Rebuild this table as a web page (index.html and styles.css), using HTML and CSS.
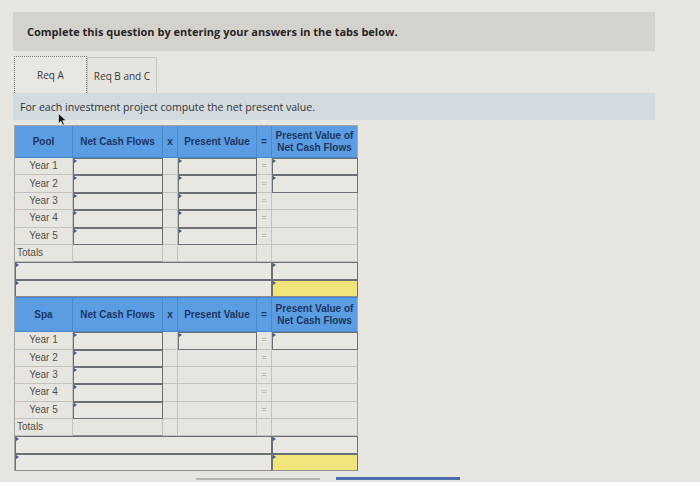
FILE: index.html
```html
<!DOCTYPE html>
<html lang="en">
<head>
<meta charset="utf-8">
<title>Net present value</title>
<link rel="stylesheet" href="styles.css">
</head>
<body>
<div class="page">
  <div class="banner">Complete this question by entering your answers in the tabs below.</div>

  <div class="tabs">
    <div class="tab active">Req A</div>
    <div class="tab">Req B and C</div>
  </div>

  <div class="instructions">For each investment project compute the net present value.</div>

  <table class="grid">
    <colgroup><col class="c-label"><col class="c-ncf"><col class="c-op"><col class="c-pv"><col class="c-op"><col class="c-res"></colgroup>
    <thead>
      <tr><th>Pool</th><th>Net Cash Flows</th><th>x</th><th>Present Value</th><th>=</th><th>Present Value of<br>Net Cash Flows</th></tr>
    </thead>
    <tbody>
      <tr><td class="lbl">Year 1</td><td class="in"><div class="inp"></div></td><td></td><td class="in"><div class="inp"></div></td><td class="eq">=</td><td class="in"><div class="inp"></div></td></tr>
      <tr><td class="lbl">Year 2</td><td class="in"><div class="inp"></div></td><td></td><td class="in"><div class="inp"></div></td><td class="eq">=</td><td class="in"><div class="inp"></div></td></tr>
      <tr><td class="lbl">Year 3</td><td class="in"><div class="inp"></div></td><td></td><td class="in"><div class="inp"></div></td><td class="eq">=</td><td></td></tr>
      <tr><td class="lbl">Year 4</td><td class="in"><div class="inp"></div></td><td></td><td class="in"><div class="inp"></div></td><td class="eq">=</td><td></td></tr>
      <tr><td class="lbl">Year 5</td><td class="in"><div class="inp"></div></td><td></td><td class="in"><div class="inp"></div></td><td class="eq">=</td><td></td></tr>
      <tr><td class="tot">Totals</td><td class="dim"></td><td></td><td></td><td></td><td></td></tr>
      <tr><td class="in" colspan="5"><div class="inp"></div></td><td class="in"><div class="inp"></div></td></tr>
      <tr><td class="in" colspan="5"><div class="inp"></div></td><td class="in"><div class="inp yellow"></div></td></tr>
    </tbody>
  </table>

  <table class="grid second">
    <colgroup><col class="c-label"><col class="c-ncf"><col class="c-op"><col class="c-pv"><col class="c-op"><col class="c-res"></colgroup>
    <thead>
      <tr><th>Spa</th><th>Net Cash Flows</th><th>x</th><th>Present Value</th><th>=</th><th>Present Value of<br>Net Cash Flows</th></tr>
    </thead>
    <tbody>
      <tr><td class="lbl">Year 1</td><td class="in"><div class="inp"></div></td><td></td><td class="in"><div class="inp"></div></td><td class="eq">=</td><td class="in"><div class="inp"></div></td></tr>
      <tr><td class="lbl">Year 2</td><td class="in"><div class="inp"></div></td><td></td><td></td><td class="eq">=</td><td></td></tr>
      <tr><td class="lbl">Year 3</td><td class="in"><div class="inp"></div></td><td></td><td></td><td class="eq">=</td><td></td></tr>
      <tr><td class="lbl">Year 4</td><td class="in"><div class="inp"></div></td><td></td><td></td><td class="eq">=</td><td></td></tr>
      <tr><td class="lbl">Year 5</td><td class="in"><div class="inp"></div></td><td></td><td></td><td class="eq">=</td><td></td></tr>
      <tr><td class="tot">Totals</td><td class="dim"></td><td></td><td></td><td></td><td></td></tr>
      <tr><td class="in" colspan="5"><div class="inp"></div></td><td class="in"><div class="inp"></div></td></tr>
      <tr><td class="in" colspan="5"><div class="inp"></div></td><td class="in"><div class="inp yellow"></div></td></tr>
    </tbody>
  </table>

  <div class="nav">
    <div class="nav-btn prev"></div>
    <div class="nav-btn next"></div>
  </div>

  <svg class="cursor" width="9" height="13" viewBox="0 0 9 13" aria-hidden="true">
    <path d="M0.5 0.5 L0.5 10.5 L3 8.2 L4.8 12.2 L6.3 11.5 L4.6 7.6 L8 7.6 Z" fill="#111" stroke="#eee" stroke-width="0.6"/>
  </svg>
</div>
</body>
</html>
```

FILE: styles.css
```css
html, body {
  margin: 0;
  padding: 0;
  overflow: hidden;
}

body {
  background: #e7e5df;
  font-family: "Open Sans", "Liberation Sans", sans-serif;
  color: #2b2b2b;
}

.page {
  position: relative;
  width: 700px;
  height: 482px;
  padding-top: 12px;
  box-sizing: border-box;
}

.banner {
  margin-left: 13px;
  width: 628px;
  height: 39px;
  padding-left: 14px;
  background: #d4d2cc;
  display: flex;
  align-items: center;
  font-weight: 700;
  font-size: 11px;
  color: #262626;
}

.tabs {
  display: flex;
  align-items: flex-end;
  margin-top: 5px;
  margin-left: 14px;
  height: 37px;
}

.tab {
  display: flex;
  align-items: center;
  justify-content: center;
  height: 36px;
  box-sizing: border-box;
  font-size: 10px;
  color: #3a3a3a;
  border: 1px solid #c9c7c1;
  border-bottom: none;
  background: #e6e4de;
}

.tab.active {
  width: 73px;
  height: 37px;
  border: 1px dotted #7a7a7a;
  border-bottom: none;
  background: #e8e6e0;
}

.tab:not(.active) {
  width: 70px;
}

.instructions {
  margin-left: 13px;
  width: 635px;
  height: 27px;
  padding-left: 7px;
  background: #d2dbe0;
  display: flex;
  align-items: center;
  font-size: 10.6px;
  color: #333;
}

.grid {
  margin-left: 14px;
  margin-top: 5px;
  width: 343px;
  table-layout: fixed;
  border-collapse: separate;
  border-spacing: 0;
  border-top: 1px solid #a9a7a2;
  border-left: 1px solid #a9a7a2;
  font-family: "Liberation Sans", Arial, sans-serif;
}

.grid.second {
  margin-top: 0;
  border-top: none;
}

.c-label { width: 58px; }
.c-ncf { width: 90px; }
.c-op { width: 15px; }
.c-pv { width: 79px; }
.c-res { width: 86px; }

.grid th {
  height: 31px;
  padding: 0;
  background: #5b9de3;
  color: #1c355e;
  font-size: 10px;
  font-weight: 700;
  line-height: 12px;
  text-align: center;
  border-right: 1px solid #4a87c9;
  border-bottom: 1px solid #4a87c9;
}

.grid.second th {
  height: 33px;
  border-top: 1px solid #4a87c9;
}

.grid td {
  height: 16.4px;
  padding: 0;
  border-right: 1px solid #c4c2bc;
  border-bottom: 1px solid #c4c2bc;
  font-size: 10px;
  color: #505050;
  line-height: 16px;
}

.grid td:last-child,
.grid th:last-child {
  border-right-color: #a9a7a2;
}

.grid tbody tr:last-child td {
  border-bottom-color: #8f8e8a;
}

.grid td.lbl {
  text-align: center;
}

.grid td.tot {
  padding-left: 2px;
}

.grid td.eq {
  text-align: center;
  font-size: 8px;
  color: #9a9a9a;
}

.grid td.dim {
  border-bottom-color: #8e8d89;
}

.grid td.in {
  border-right: 1px solid #6d6f77;
  border-bottom: 1px solid #6d6f77;
}

.inp {
  position: relative;
  height: 16.4px;
  box-sizing: border-box;
  border-top: 1px solid #6d6f77;
  border-left: 1px solid #6d6f77;
  background: #e9e7e2;
}

.inp::before {
  content: "";
  position: absolute;
  left: 0;
  top: 0;
  border-top: 2.5px solid transparent;
  border-bottom: 2.5px solid transparent;
  border-left: 3.5px solid #3b58a3;
}

.inp.yellow {
  background: #efe57a;
}

.nav {
  display: flex;
  margin-top: 6px;
  margin-left: 196px;
  gap: 16px;
}

.nav-btn {
  width: 124px;
  height: 20px;
}

.nav-btn.prev {
  margin-top: 1px;
  border-top: 2px solid #b7b6b2;
}

.nav-btn.next {
  border-top: 3px solid #4a6cad;
}

.cursor {
  position: absolute;
  left: 58px;
  top: 113px;
}
```
